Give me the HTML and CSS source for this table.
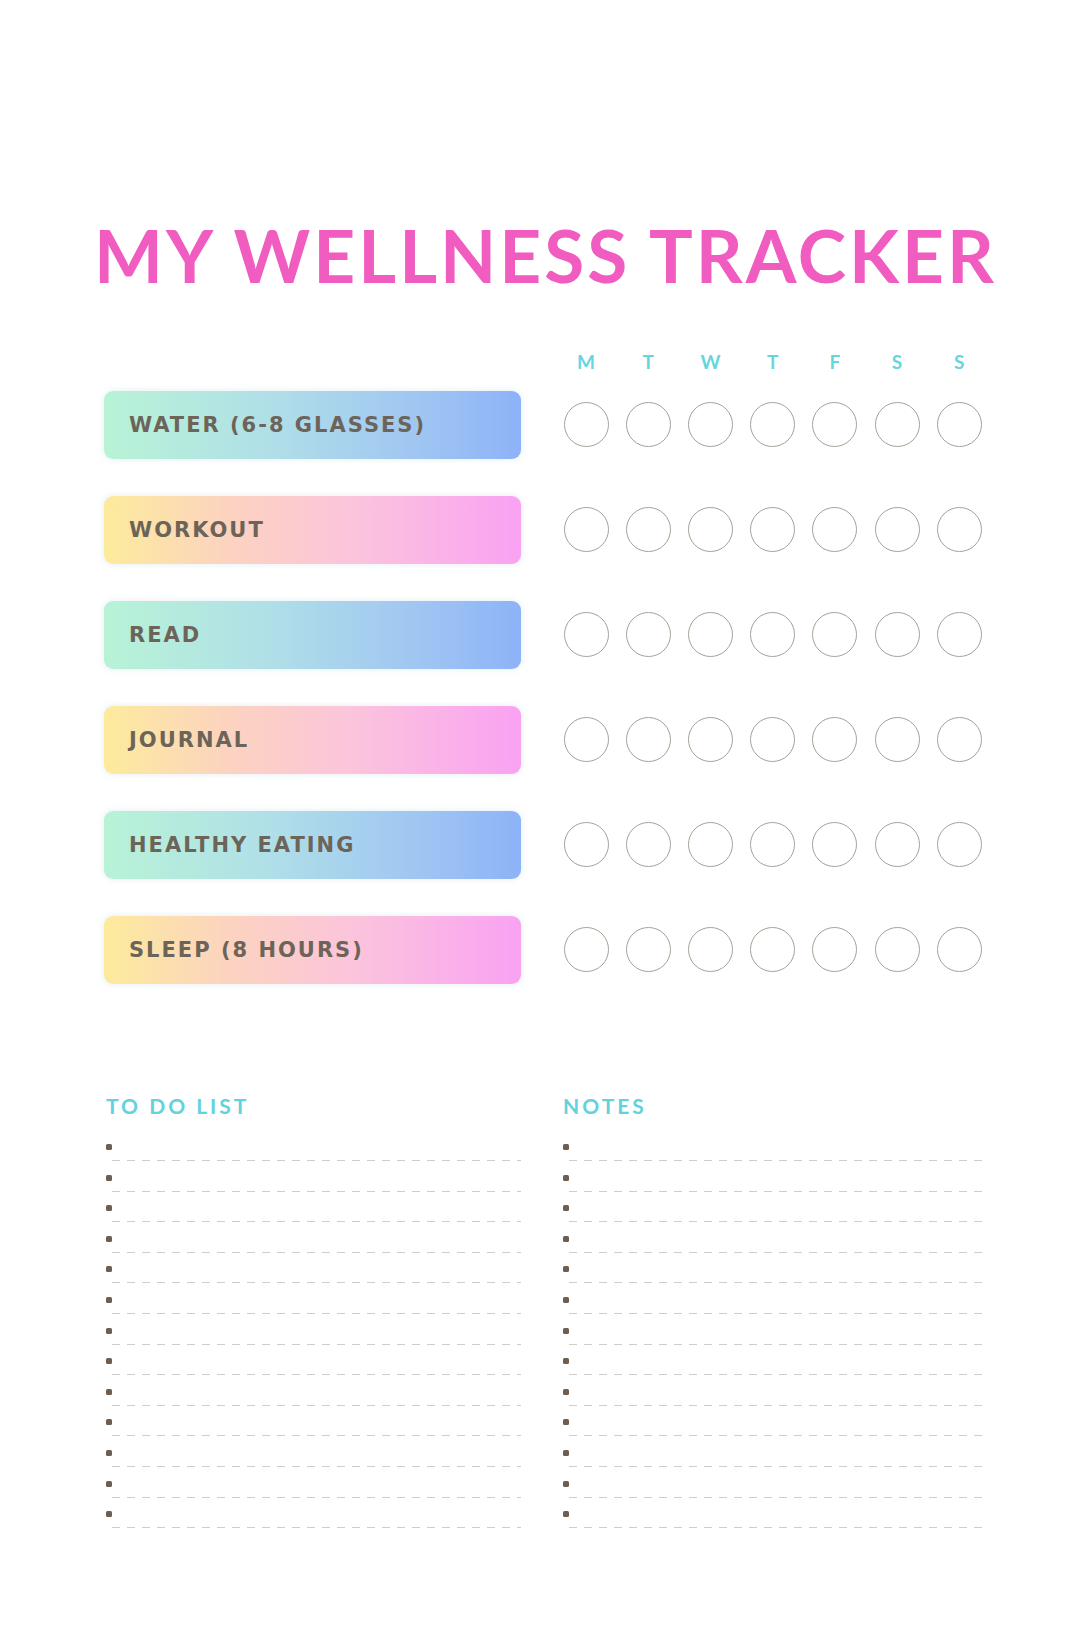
FILE: index.html
```html
<!DOCTYPE html>
<html lang="en">
<head>
<meta charset="utf-8">
<title>My Wellness Tracker</title>
<link rel="stylesheet" href="styles.css">
</head>
<body>
<div class="page">
  <h1 class="title">MY WELLNESS TRACKER</h1>

  <div class="tracker">
    <div class="row head">
      <div class="label-space"></div>
      <div class="days">
        <span class="day">M</span><span class="day">T</span><span class="day">W</span><span class="day">T</span><span class="day">F</span><span class="day">S</span><span class="day">S</span>
      </div>
    </div>
    <div class="row">
      <div class="bar blue">WATER (6-8 GLASSES)</div>
      <div class="days"><i class="c"></i><i class="c"></i><i class="c"></i><i class="c"></i><i class="c"></i><i class="c"></i><i class="c"></i></div>
    </div>
    <div class="row">
      <div class="bar pink">WORKOUT</div>
      <div class="days"><i class="c"></i><i class="c"></i><i class="c"></i><i class="c"></i><i class="c"></i><i class="c"></i><i class="c"></i></div>
    </div>
    <div class="row">
      <div class="bar blue">READ</div>
      <div class="days"><i class="c"></i><i class="c"></i><i class="c"></i><i class="c"></i><i class="c"></i><i class="c"></i><i class="c"></i></div>
    </div>
    <div class="row">
      <div class="bar pink">JOURNAL</div>
      <div class="days"><i class="c"></i><i class="c"></i><i class="c"></i><i class="c"></i><i class="c"></i><i class="c"></i><i class="c"></i></div>
    </div>
    <div class="row">
      <div class="bar blue">HEALTHY EATING</div>
      <div class="days"><i class="c"></i><i class="c"></i><i class="c"></i><i class="c"></i><i class="c"></i><i class="c"></i><i class="c"></i></div>
    </div>
    <div class="row">
      <div class="bar pink">SLEEP (8 HOURS)</div>
      <div class="days"><i class="c"></i><i class="c"></i><i class="c"></i><i class="c"></i><i class="c"></i><i class="c"></i><i class="c"></i></div>
    </div>
  </div>

  <div class="lists">
    <section class="col todo">
      <h2 class="col-title">TO DO LIST</h2>
      <ul class="list">
        <li class="item"><b class="dot"></b><span class="dash"></span></li>
        <li class="item"><b class="dot"></b><span class="dash"></span></li>
        <li class="item"><b class="dot"></b><span class="dash"></span></li>
        <li class="item"><b class="dot"></b><span class="dash"></span></li>
        <li class="item"><b class="dot"></b><span class="dash"></span></li>
        <li class="item"><b class="dot"></b><span class="dash"></span></li>
        <li class="item"><b class="dot"></b><span class="dash"></span></li>
        <li class="item"><b class="dot"></b><span class="dash"></span></li>
        <li class="item"><b class="dot"></b><span class="dash"></span></li>
        <li class="item"><b class="dot"></b><span class="dash"></span></li>
        <li class="item"><b class="dot"></b><span class="dash"></span></li>
        <li class="item"><b class="dot"></b><span class="dash"></span></li>
        <li class="item"><b class="dot"></b><span class="dash"></span></li>
      </ul>
    </section>
    <section class="col notes">
      <h2 class="col-title">NOTES</h2>
      <ul class="list">
        <li class="item"><b class="dot"></b><span class="dash"></span></li>
        <li class="item"><b class="dot"></b><span class="dash"></span></li>
        <li class="item"><b class="dot"></b><span class="dash"></span></li>
        <li class="item"><b class="dot"></b><span class="dash"></span></li>
        <li class="item"><b class="dot"></b><span class="dash"></span></li>
        <li class="item"><b class="dot"></b><span class="dash"></span></li>
        <li class="item"><b class="dot"></b><span class="dash"></span></li>
        <li class="item"><b class="dot"></b><span class="dash"></span></li>
        <li class="item"><b class="dot"></b><span class="dash"></span></li>
        <li class="item"><b class="dot"></b><span class="dash"></span></li>
        <li class="item"><b class="dot"></b><span class="dash"></span></li>
        <li class="item"><b class="dot"></b><span class="dash"></span></li>
        <li class="item"><b class="dot"></b><span class="dash"></span></li>
      </ul>
    </section>
  </div>
</div>
</body>
</html>
```
FILE: styles.css
```css
html, body {
  margin: 0;
  padding: 0;
  background: #ffffff;
}

.page {
  width: 1080px;
  height: 1633px;
  box-sizing: border-box;
  padding-top: 213px;
  font-family: Lato, "Open Sans", sans-serif;
  overflow: hidden;
}

.title {
  margin: 0 0 0 94px;
  font-size: 73px;
  line-height: 84px;
  font-weight: 700;
  color: #f05cbf;
  letter-spacing: 3px;
  white-space: nowrap;
}

.tracker {
  margin: 50px 0 0 104px;
  display: flex;
  flex-direction: column;
  gap: 37px;
}

.row {
  display: flex;
  align-items: center;
}

.row.head {
  height: 30px;
  margin-bottom: -23px;
}

.label-space {
  width: 417px;
}

.bar {
  width: 417px;
  height: 68px;
  box-sizing: border-box;
  padding-left: 25px;
  display: flex;
  align-items: center;
  border-radius: 9px;
  font-family: "DejaVu Sans", sans-serif;
  font-size: 21px;
  font-weight: 700;
  letter-spacing: 2px;
  color: #6c6458;
  box-shadow: 0 0 6px rgba(200, 220, 230, 0.5);
}

.bar.blue {
  background: linear-gradient(90deg, #b8f3d6 0%, #b0dfe8 40%, #a0c6f2 75%, #8db3f8 100%);
}

.bar.pink {
  background: linear-gradient(90deg, #fdeb9c 0%, #fcd3c0 30%, #fbc4dc 60%, #f9a2f3 100%);
}

.days {
  display: flex;
  margin-left: 34px;
}

.day {
  width: 62.2px;
  text-align: center;
  font-size: 19px;
  font-weight: 700;
  color: #66d6de;
  line-height: 30px;
}

.c {
  width: 62.2px;
  height: 46px;
  display: flex;
  justify-content: center;
}

.c::before {
  content: "";
  width: 43px;
  height: 43px;
  border: 1.5px solid #a8a197;
  border-radius: 50%;
}

.lists {
  margin: 109px 0 0 106px;
  display: grid;
  grid-template-columns: 415px 419px;
  column-gap: 42px;
}

.col-title {
  margin: 0 0 25px 0;
  font-size: 21px;
  line-height: 26px;
  font-weight: 700;
  letter-spacing: 3px;
  color: #62d2dc;
}

.list {
  list-style: none;
  margin: 0;
  padding: 0;
  display: flex;
  flex-direction: column;
}

.item {
  height: 30.6px;
  display: flex;
  flex-direction: column;
}

.dot {
  display: block;
  width: 6px;
  height: 6px;
  border-radius: 1.5px;
  background: #6d5e50;
}

.dash {
  display: block;
  height: 1px;
  margin: 10px 0 0 6px;
  background: repeating-linear-gradient(90deg, #d3ccc4 0 8px, transparent 8px 15px);
}
```
